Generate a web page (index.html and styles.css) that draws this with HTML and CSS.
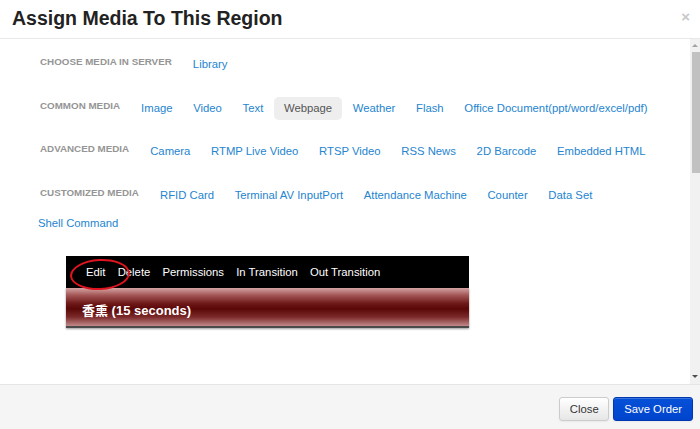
FILE: index.html
```html
<!DOCTYPE html>
<html lang="en">
<head>
    <meta charset="UTF-8">
    <meta name="viewport" content="width=device-width, initial-scale=1.0">
    <title>Assign Media To This Region</title>
    <link rel="stylesheet" href="styles.css">
</head>
<body>
    <div class="modal">
        <!-- 标题栏 -->
        <div class="modal-header">
            <h3>Assign Media To This Region</h3>
            <span class="close-x">&times;</span>
        </div>

        <!-- 内容区 -->
        <div class="modal-body">
            <div class="body-content">
                <ul class="media-row">
                    <li class="row-label">Choose Media In Server</li>
                    <li><a href="#">Library</a></li>
                </ul>
                <ul class="media-row">
                    <li class="row-label">Common Media</li>
                    <li><a href="#">Image</a></li>
                    <li><a href="#">Video</a></li>
                    <li><a href="#">Text</a></li>
                    <li class="active"><a href="#">Webpage</a></li>
                    <li><a href="#">Weather</a></li>
                    <li><a href="#">Flash</a></li>
                    <li><a href="#">Office Document(ppt/word/excel/pdf)</a></li>
                </ul>
                <ul class="media-row">
                    <li class="row-label">Advanced Media</li>
                    <li><a href="#">Camera</a></li>
                    <li><a href="#">RTMP Live Video</a></li>
                    <li><a href="#">RTSP Video</a></li>
                    <li><a href="#">RSS News</a></li>
                    <li><a href="#">2D Barcode</a></li>
                    <li><a href="#">Embedded HTML</a></li>
                </ul>
                <ul class="media-row tight">
                    <li class="row-label">Customized Media</li>
                    <li><a href="#">RFID Card</a></li>
                    <li><a href="#">Terminal AV InputPort</a></li>
                    <li><a href="#">Attendance Machine</a></li>
                    <li><a href="#">Counter</a></li>
                    <li><a href="#">Data Set</a></li>
                </ul>
                <ul class="media-row extra">
                    <li><a href="#">Shell Command</a></li>
                </ul>

                <!-- 时间线 -->
                <div class="timeline">
                    <div class="timeline-bar">
                        <a href="#">Edit</a>
                        <a href="#">Delete</a>
                        <a href="#">Permissions</a>
                        <a href="#">In Transition</a>
                        <a href="#">Out Transition</a>
                        <span class="mark"></span>
                    </div>
                    <div class="timeline-item">香熏 (15 seconds)</div>
                </div>
            </div>
            <div class="scrollbar">
                <span class="arrow up"></span>
                <span class="thumb"></span>
                <span class="arrow down"></span>
            </div>
        </div>

        <!-- 底部按钮 -->
        <div class="modal-footer">
            <button class="btn">Close</button>
            <button class="btn btn-primary">Save Order</button>
        </div>
    </div>
</body>
</html>
```

FILE: styles.css
```css
body {
    margin: 0;
    font-family: "Liberation Sans", Arial, "Noto Sans CJK SC", sans-serif;
    background: white;
}
.modal {
    width: 700px;
    height: 429px;
    display: flex;
    flex-direction: column;
}
.modal-header {
    display: flex;
    align-items: center;
    justify-content: space-between;
    padding: 0 10px 2px 12px;
    border-bottom: 1px solid #e8e8e8;
    box-sizing: border-box;
    height: 39px;
}
.modal-header h3 {
    margin: 0;
    font-size: 19.5px;
    font-weight: bold;
    color: #222;
}
.close-x {
    font-size: 15px;
    font-weight: bold;
    color: #c8c8c8;
    margin-top: -4px;
}
.modal-body {
    height: 345px;
    display: flex;
}
.body-content {
    flex: 1;
    overflow: hidden;
    padding-top: 14px;
}
.media-row {
    list-style: none;
    margin: 0 0 20.5px 0;
    padding: 0 0 0 40px;
    display: flex;
    flex-wrap: wrap;
}
.media-row.tight {
    margin-bottom: 5.5px;
}
.media-row.extra {
    padding-left: 28.3px;
    margin-bottom: 21px;
}
.row-label {
    font-size: 9.8px;
    font-weight: bold;
    text-transform: uppercase;
    color: #959595;
    line-height: 17px;
    margin-right: 11.5px;
}
.media-row li a {
    display: block;
    font-size: 11.3px;
    line-height: 23px;
    padding: 0 9.6px;
    margin-right: 1.5px;
    border-radius: 5px;
    color: #2585cf;
    text-decoration: none;
}
.media-row li.active a {
    background: #eee;
    color: #555;
}
.timeline {
    width: 403px;
    margin-left: 66px;
}
.timeline-bar {
    position: relative;
    height: 32px;
    background: black;
    display: flex;
    align-items: center;
    gap: 12.2px;
    padding-left: 20px;
}
.timeline-bar a {
    color: white;
    font-size: 11.3px;
    text-decoration: none;
}
.mark {
    position: absolute;
    left: 3.5px;
    top: 2.5px;
    width: 56px;
    height: 27px;
    border: 2px solid #e0141e;
    border-radius: 50%;
    transform: rotate(-3deg);
}
.timeline-item {
    height: 35px;
    padding: 5px 0 0 16px;
    line-height: 36px;
    font-size: 13px;
    font-weight: bold;
    color: white;
    background: linear-gradient(to bottom, #d4a4a4 0%, #a45656 18%, #701a1a 38%, #5a0707 52%, #7a2828 72%, #b27474 90%, #c48e8e 96%, #4a4a4a 96%, #4a4a4a 100%);
    box-shadow: 0 1px 2px rgba(0, 0, 0, 0.4);
}
.scrollbar {
    width: 10px;
    background: #f1f1f1;
    display: flex;
    flex-direction: column;
    align-items: center;
}
.arrow {
    width: 0;
    height: 0;
    border-left: 3px solid transparent;
    border-right: 3px solid transparent;
}
.arrow.up {
    border-bottom: 3px solid #a3a3a3;
    margin: 5px 0 5px;
}
.arrow.down {
    border-top: 3px solid #505050;
    margin: auto 0 6px;
}
.thumb {
    width: 8px;
    height: 121px;
    background: #c1c1c1;
    margin-left: 2px;
}
.modal-footer {
    flex: 1;
    background: #f5f5f5;
    border-top: 1px solid #e5e5e5;
    display: flex;
    justify-content: flex-end;
    align-items: flex-start;
    gap: 4px;
    padding: 12px 7px 0 0;
}
.btn {
    height: 24px;
    font-family: inherit;
    font-size: 11.3px;
    padding: 0 9.5px;
    border: 1px solid #ccc;
    border-radius: 3px;
    color: #333;
    background: linear-gradient(to bottom, #ffffff, #e6e6e6);
    box-shadow: inset 0 1px 0 rgba(255, 255, 255, 0.2), 0 1px 2px rgba(0, 0, 0, 0.05);
}
.btn-primary {
    color: white;
    border-color: #0038b0;
    background: linear-gradient(to bottom, #0650d8, #0044cc);
    padding: 0 10px;
}
```
